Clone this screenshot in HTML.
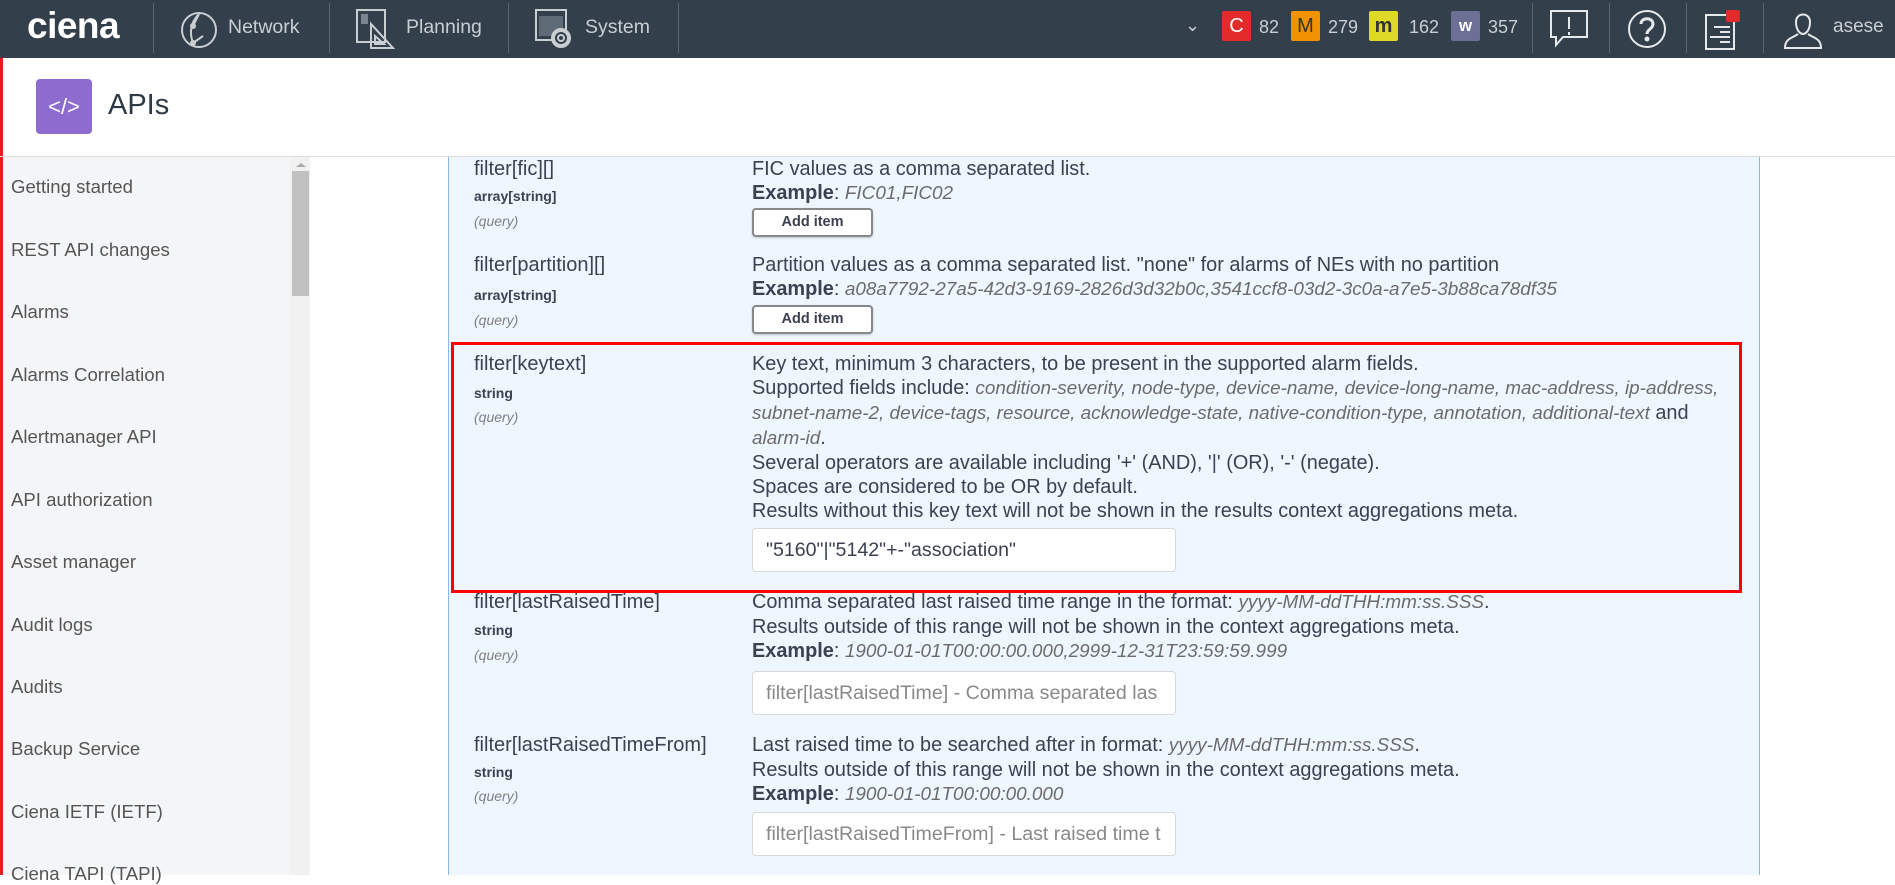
<!DOCTYPE html>
<html><head><meta charset="utf-8"><style>
*{margin:0;padding:0;box-sizing:border-box}
body{width:1895px;height:875px;overflow:hidden;position:relative;background:#fff;font-family:"Liberation Sans",sans-serif;color:#3b4151}
.a{position:absolute;white-space:nowrap}
#hdr{position:absolute;left:0;top:0;width:1895px;height:58px;background:#333f4b}
.sep{position:absolute;top:3px;width:1px;height:50px;background:#5a6570}
.nav{color:#c9ced3;font-size:19.5px;top:16px}
.badge{position:absolute;top:11px;width:29px;height:30px;border-radius:2px;font-size:20px;text-align:center;line-height:30px}
.cnt{color:#c9ced3;font-size:18px;top:17px}
.side{color:#555;font-size:18.6px;left:11px}
.nm{font-size:20px;color:#3b4151;left:474px}
.ty{font-size:14px;font-weight:bold;left:474px}
.qy{font-size:14px;font-style:italic;color:#808080;left:474px}
.d{font-size:19.9px;left:752px;line-height:24px}
.d i{color:#6b6b6b;font-size:18.9px}
.btn{position:absolute;left:752px;width:121px;height:29px;border:2px solid #888;border-radius:4px;background:#fff;font-size:14.5px;font-weight:bold;text-align:center;line-height:25px;color:#3b4151;box-shadow:0 1px 2px rgba(0,0,0,.2)}
.inp{position:absolute;left:752px;width:424px;height:44px;border:1px solid #d8d8d8;border-radius:4px;background:#fff;font-size:19.6px;padding-left:13px;line-height:42px;overflow:hidden;white-space:nowrap}
</style></head><body>
<div id="hdr">
 <div class="a" style="left:27px;top:5px;color:#fff;font-size:37px;font-weight:bold;letter-spacing:-0.5px">ciena</div>
 <div class="sep" style="left:153px"></div>
 <svg class="a" style="left:179px;top:10px" width="40" height="40" viewBox="0 0 40 40" fill="none" stroke="#c9ced3" stroke-width="2"><circle cx="20" cy="20" r="17"/><path d="M20 4 C12 12 10 22 14 33 M14 33 L24 26 M20 4 L14 16"/><circle cx="14" cy="33" r="2" fill="#c9ced3"/><circle cx="14" cy="16" r="2" fill="#c9ced3"/></svg>
 <div class="a nav" style="left:228px">Network</div>
 <div class="sep" style="left:329px"></div>
 <svg class="a" style="left:355px;top:8px" width="42" height="42" viewBox="0 0 42 42" fill="none" stroke="#c9ced3" stroke-width="2"><rect x="2" y="2" width="28" height="32"/><rect x="6" y="6" width="7" height="10" fill="#7a858f" stroke="none"/><path d="M16 16 L16 40 L38 40 Z M20 28 L20 36 L29 36 Z"/></svg>
 <div class="a nav" style="left:406px">Planning</div>
 <div class="sep" style="left:508px"></div>
 <svg class="a" style="left:534px;top:8px" width="44" height="44" viewBox="0 0 44 44" fill="none" stroke="#c9ced3" stroke-width="2"><rect x="2" y="2" width="30" height="30"/><rect x="5" y="8" width="24" height="20" fill="#5f6b77" stroke="none"/><circle cx="27" cy="30" r="8" fill="#333f4b" stroke-width="4"/><circle cx="27" cy="30" r="3"/></svg>
 <div class="a nav" style="left:585px">System</div>
 <div class="sep" style="left:678px"></div>
 <div class="a" style="left:1185px;top:15px;color:#c9ced3;font-size:18px">&#8964;</div>
 <div class="badge" style="left:1222px;background:#e32b2b;color:#fff">C</div><div class="a cnt" style="left:1259px">82</div>
 <div class="badge" style="left:1291px;background:#f39200;color:#333">M</div><div class="a cnt" style="left:1328px">279</div>
 <div class="badge" style="left:1369px;background:#ded926;color:#333;font-weight:bold">m</div><div class="a cnt" style="left:1409px">162</div>
 <div class="badge" style="left:1451px;background:#6d7096;color:#fff;font-weight:bold;font-size:17px">w</div><div class="a cnt" style="left:1488px">357</div>
 <div class="sep" style="left:1532px"></div>
 <svg class="a" style="left:1549px;top:9px" width="40" height="40" viewBox="0 0 40 40" fill="none" stroke="#e6e9ec" stroke-width="2"><path d="M2 2 H38 V28 H14 L7 36 V28 H2 Z"/><path d="M20 8 V20 M20 23 V26"/></svg>
 <div class="sep" style="left:1609px"></div>
 <svg class="a" style="left:1627px;top:9px" width="40" height="40" viewBox="0 0 40 40" fill="none" stroke="#e6e9ec" stroke-width="2"><circle cx="20" cy="20" r="18"/><path d="M14 15 C14 8 26 8 26 15 C26 20 20 20 20 25" stroke-width="3"/><circle cx="20" cy="30" r="1.5" fill="#e6e9ec"/></svg>
 <div class="sep" style="left:1686px"></div>
 <svg class="a" style="left:1704px;top:9px" width="40" height="42" viewBox="0 0 40 42" fill="none" stroke="#e6e9ec" stroke-width="2"><rect x="2" y="6" width="28" height="34"/><path d="M10 18 H26 M16 23 H26 M6 28 H26 M16 33 H26"/><rect x="22" y="1" width="14" height="12" rx="2" fill="#e32b2b" stroke="none"/></svg>
 <div class="sep" style="left:1763px"></div>
 <svg class="a" style="left:1783px;top:10px" width="40" height="40" viewBox="0 0 40 40" fill="none" stroke="#e6e9ec" stroke-width="2"><path d="M13 12 C13 2 27 2 27 12 C27 20 23 24 20 24 C17 24 13 20 13 12 Z M15 24 C10 28 2 28 2 38 H38 C38 28 30 28 25 24"/></svg>
 <div class="a" style="left:1833px;top:16px;color:#c9ced3;font-size:19px">asese</div>
</div>
<div class="a" style="left:0;top:58px;width:3px;height:817px;background:#e02020"></div>
<div class="a" style="left:36px;top:79px;width:56px;height:55px;background:#8e6bcf;border-radius:4px;color:#fff;font-size:22px;text-align:center;line-height:55px">&lt;/&gt;</div>
<div class="a" style="left:108px;top:89px;font-size:29px;color:#2d3a46">APIs</div>
<div class="a" style="left:0;top:156px;width:1895px;height:1px;background:#ddd"></div>
<div class="a" style="left:3px;top:157px;width:287px;height:718px;background:#f4f5f7"></div>
<div class="a" style="left:290px;top:157px;width:20px;height:718px;background:#f1f1f1"></div>
<div class="a" style="left:296px;top:163px;border-left:5px solid transparent;border-right:5px solid transparent;border-bottom:4px solid #aaa"></div>
<div class="a" style="left:292px;top:171px;width:17px;height:125px;background:#c1c1c1"></div>
<div class="a side" style="top:176px">Getting started</div>
<div class="a side" style="top:239px">REST API changes</div>
<div class="a side" style="top:301px">Alarms</div>
<div class="a side" style="top:364px">Alarms Correlation</div>
<div class="a side" style="top:426px">Alertmanager API</div>
<div class="a side" style="top:489px">API authorization</div>
<div class="a side" style="top:551px">Asset manager</div>
<div class="a side" style="top:614px">Audit logs</div>
<div class="a side" style="top:676px">Audits</div>
<div class="a side" style="top:738px">Backup Service</div>
<div class="a side" style="top:801px">Ciena IETF (IETF)</div>
<div class="a side" style="top:863px">Ciena TAPI (TAPI)</div>
<div class="a" style="left:448px;top:157px;width:1312px;height:718px;background:#eef6ff;border-left:1px solid #8ab8ec;border-right:1px solid #8ab8ec"></div>

<div class="a nm" style="top:158px">filter[fic][]</div>
<div class="a ty" style="top:188px">array[string]</div>
<div class="a qy" style="top:213px">(query)</div>
<div class="a d" style="top:157px">FIC values as a comma separated list.<br><b>Example</b>: <i>FIC01,FIC02</i></div>
<div class="btn" style="top:208px">Add item</div>

<div class="a nm" style="top:254px">filter[partition][]</div>
<div class="a ty" style="top:287px">array[string]</div>
<div class="a qy" style="top:312px">(query)</div>
<div class="a d" style="top:253px">Partition values as a comma separated list. "none" for alarms of NEs with no partition<br><b>Example</b>: <i>a08a7792-27a5-42d3-9169-2826d3d32b0c,3541ccf8-03d2-3c0a-a7e5-3b88ca78df35</i></div>
<div class="btn" style="top:305px">Add item</div>

<div class="a" style="left:451px;top:342px;width:1291px;height:251px;border:3px solid #f00"></div>
<div class="a nm" style="top:353px">filter[keytext]</div>
<div class="a ty" style="top:385px">string</div>
<div class="a qy" style="top:409px">(query)</div>
<div class="a d" style="top:352px">Key text, minimum 3 characters, to be present in the supported alarm fields.<br>Supported fields include: <i>condition-severity, node-type, device-name, device-long-name, mac-address, ip-address,</i><br><i>subnet-name-2, device-tags, resource, acknowledge-state, native-condition-type, annotation, additional-text</i> and<br><i>alarm-id</i>.<br>Several operators are available including '+' (AND), '|' (OR), '-' (negate).<br>Spaces are considered to be OR by default.<br>Results without this key text will not be shown in the results context aggregations meta.</div>
<div class="inp" style="top:528px">"5160"|"5142"+-"association"</div>

<div class="a nm" style="top:591px">filter[lastRaisedTime]</div>
<div class="a ty" style="top:622px">string</div>
<div class="a qy" style="top:647px">(query)</div>
<div class="a d" style="top:590px">Comma separated last raised time range in the format: <i>yyyy-MM-ddTHH:mm:ss.SSS</i>.<br>Results outside of this range will not be shown in the context aggregations meta.<br><b>Example</b>: <i>1900-01-01T00:00:00.000,2999-12-31T23:59:59.999</i></div>
<div class="inp" style="top:671px;color:#888">filter[lastRaisedTime] - Comma separated las</div>

<div class="a nm" style="top:734px">filter[lastRaisedTimeFrom]</div>
<div class="a ty" style="top:764px">string</div>
<div class="a qy" style="top:788px">(query)</div>
<div class="a d" style="top:733px">Last raised time to be searched after in format: <i>yyyy-MM-ddTHH:mm:ss.SSS</i>.<br>Results outside of this range will not be shown in the context aggregations meta.<br><b>Example</b>: <i>1900-01-01T00:00:00.000</i></div>
<div class="inp" style="top:812px;color:#888">filter[lastRaisedTimeFrom] - Last raised time t</div>
</body></html>
